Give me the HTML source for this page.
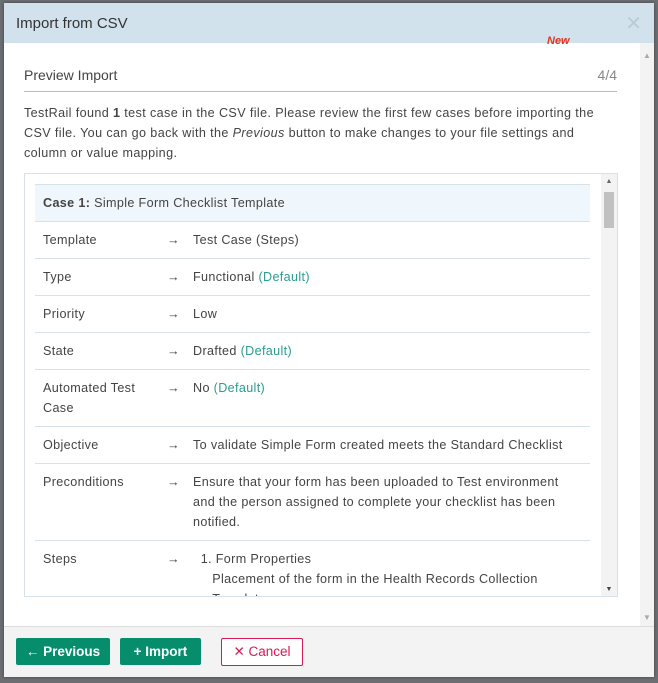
<!DOCTYPE html><html><head><style>
body{margin:0;width:658px;height:683px;background:#6b6e72;font-family:"Liberation Sans",sans-serif;position:relative;overflow:hidden}
.dlg{position:absolute;left:4px;top:3px;width:650px;height:674px;background:#fff;box-shadow:0 0 3px #0006}
.hd{height:40px;background:#d1e2ed;font-size:15px;color:#333;line-height:42px;padding-left:12px;position:relative}
.x{position:absolute;right:12px;top:0;color:#b8ccd8;font-size:20px}
.new{position:absolute;left:543px;top:32px;color:#e8341c;font-size:11px;font-weight:bold;font-style:italic}
.osb{position:absolute;right:0;top:40px;width:14px;height:587px;background:#f3f3f3}
.ttl{position:absolute;left:20px;top:64px;width:593px;border-bottom:1px solid #bbb;height:24px;font-size:14px;color:#444}
.ttl span{float:right;color:#888}
.p{position:absolute;left:20px;top:100px;width:600px;font-size:12.6px;letter-spacing:0.38px;line-height:20px;color:#444;white-space:nowrap}
.box{position:absolute;left:20px;top:170px;width:592px;height:422px;border:1px solid #d6e2ea;overflow:hidden}
.isb{position:absolute;right:0;top:0;width:16px;height:100%;background:#f3f3f3}
.thumb{position:absolute;left:3px;top:18px;width:10px;height:36px;background:#c1c1c1}
table{position:absolute;left:10px;top:10px;width:555px;border-collapse:collapse;table-layout:fixed;font-size:12.6px;letter-spacing:0.35px;color:#444}
td{border-top:1px solid #d6e2ea;padding:8px 0 8px 8px;line-height:20px;vertical-align:top;white-space:nowrap}
td.a{padding-left:0}
.d{color:#2a9d8f}
.ft{position:absolute;left:0;bottom:0;width:650px;height:50px;background:#f3f3f3;border-top:1px solid #ddd}
.b{position:absolute;top:11px;height:27px;line-height:27px;font-size:13.5px;font-weight:bold;color:#fff;background:#068e6c;border-radius:2px;text-align:center}
</style></head><body>
<div class="dlg">
<div class="hd">Import from CSV<span class="x">✕</span></div>
<div class="new">New</div>
<div class="osb"><div style="color:#aaa;font-size:8px;text-align:center;margin-top:8px">▲</div><div style="position:absolute;bottom:8px;width:14px;color:#aaa;font-size:8px;text-align:center">▼</div></div>
<div class="ttl">Preview Import<span>4/4</span></div>
<div class="p">TestRail found <b>1</b> test case in the CSV file. Please review the first few cases before importing the<br>CSV file. You can go back with the <i>Previous</i> button to make changes to your file settings and<br>column or value mapping.</div>
<div class="box">
<table>
<colgroup><col style="width:132px"><col style="width:18px"><col></colgroup>
<tr style="background:#eff6fc"><td colspan="3"><b>Case 1:</b> Simple Form Checklist Template</td></tr>
<tr><td>Template</td><td class="a">→</td><td>Test Case (Steps)</td></tr>
<tr><td>Type</td><td class="a">→</td><td>Functional <span class="d">(Default)</span></td></tr>
<tr><td>Priority</td><td class="a">→</td><td>Low</td></tr>
<tr><td>State</td><td class="a">→</td><td>Drafted <span class="d">(Default)</span></td></tr>
<tr><td>Automated Test<br>Case</td><td class="a">→</td><td>No <span class="d">(Default)</span></td></tr>
<tr><td>Objective</td><td class="a">→</td><td>To validate Simple Form created meets the Standard Checklist</td></tr>
<tr><td>Preconditions</td><td class="a">→</td><td>Ensure that your form has been uploaded to Test environment<br>and the person assigned to complete your checklist has been<br>notified.</td></tr>
<tr><td>Steps</td><td class="a">→</td><td>&nbsp;&nbsp;1. Form Properties<br>&nbsp;&nbsp;&nbsp;&nbsp;&nbsp;Placement of the form in the Health Records Collection<br>&nbsp;&nbsp;&nbsp;&nbsp;&nbsp;Templates</td></tr>
</table>
<div class="isb"><div style="color:#666;font-size:7px;text-align:center;margin-top:4px">▲</div><div class="thumb"></div><div style="position:absolute;bottom:3px;width:16px;color:#444;font-size:7px;text-align:center">▼</div></div>
</div>
<div class="ft">
<div class="b" style="left:12px;width:94px">← Previous</div>
<div class="b" style="left:116px;width:81px">+ Import</div>
<div class="b" style="left:217px;width:80px;background:#fff;color:#d81b4f;border:1px solid #d81b4f;height:26px;line-height:26px;font-weight:normal">✕ Cancel</div>
</div>
</div>
</body></html>
